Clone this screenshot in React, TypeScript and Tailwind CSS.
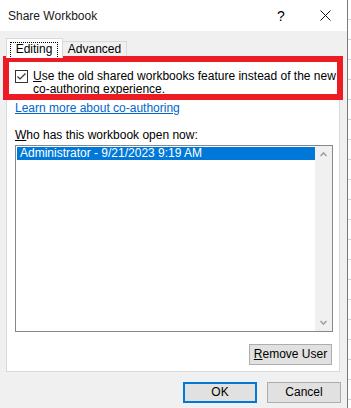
import React from 'react';

const font = { fontFamily: '"Liberation Sans", Arial, sans-serif' };

const Chevron: React.FC<{ up?: boolean }> = ({ up }) => (
  <svg width="17" height="17" viewBox="0 0 17 17">
    <polyline
      points={up ? '5.5,10 8.5,7 11.5,10' : '5.5,7 8.5,10 11.5,7'}
      fill="none"
      stroke="#a3a3a3"
      strokeWidth="1.6"
    />
  </svg>
);

const App: React.FC = () => {
  return (
    <div className="w-[351px] h-[408px] bg-white relative overflow-hidden flex text-[12px] text-black" style={font}>
      {/* dialog window */}
      <div className="w-[348px] h-full flex flex-col border-r border-[#7a7a7a]">
        {/* title bar */}
        <div className="h-[31px] bg-white flex items-center pl-[8px] shrink-0">
          <span className="leading-[14px] text-[12px] text-[#1a1a1a]">Share Workbook</span>
          <span className="ml-auto text-[14px] leading-[14px] w-[8px] text-center mr-[35px]">?</span>
          <svg width="11" height="11" viewBox="0 0 11 11" className="mr-[16px]">
            <path d="M0.5 0.5 L10.5 10.5 M10.5 0.5 L0.5 10.5" stroke="#111" strokeWidth="1" />
          </svg>
        </div>

        {/* body */}
        <div className="flex-1 bg-[#f0f0f0] pl-[6px] pt-[7px] flex flex-col">
          {/* tabs */}
          <div className="flex items-end h-[19px]">
            <div className="relative z-10 w-[57px] h-[20px] -mb-[1px] bg-white border border-b-0 border-[#d9d9d9] pl-[3px] pt-[3px]">
              <span className="block w-[48px] h-[15px] border border-b-0 border-dotted border-black text-center leading-[13px]">
                Editing
              </span>
            </div>
            <div className="w-[64px] h-[16px] border-t border-r border-[#d9d9d9] bg-[#f0f0f0] text-center leading-[13px] pt-[1px]">
              Advanced
            </div>
          </div>

          {/* tab panel */}
          <div className="w-[334px] h-[315px] bg-white border border-[#d9d9d9] pl-[8px] pt-[12px] flex flex-col">
            <div className="flex gap-[5px]">
              <div className="w-[13px] h-[13px] border border-[#333] bg-white shrink-0 flex items-center justify-center">
                <svg width="11" height="11" viewBox="0 0 11 11">
                  <polyline points="1.5,5.5 4,8 9.5,2.5" fill="none" stroke="#333" strokeWidth="1.2" />
                </svg>
              </div>
              <div className="leading-[13px] whitespace-nowrap">
                <span className="underline">U</span>se the old shared workbooks feature instead of the new
                <br />
                co-authoring experience.
              </div>
            </div>

            <a className="mt-[6px] leading-[13px] text-[#0066cc] underline w-fit">Learn more about co-authoring</a>

            <div className="mt-[14px] leading-[13px]">
              <span className="underline">W</span>ho has this workbook open now:
            </div>

            <div className="mt-[3px] w-[318px] h-[187px] border border-[#828790] bg-white flex">
              <div className="flex-1 pt-[1px] pl-[1px]">
                <div className="h-[13px] bg-[#0078d7] text-white leading-[13px] pl-[3px] whitespace-nowrap">
                  Administrator - 9/21/2023 9:19 AM
                </div>
              </div>
              <div className="w-[17px] bg-[#f0f0f0] flex flex-col justify-between">
                <Chevron up />
                <Chevron />
              </div>
            </div>

            <div className="mt-[12px] w-[318px] flex justify-end pr-[1px]">
              <button className="w-[83px] h-[21px] bg-[#e1e1e1] border border-[#adadad] leading-[13px] text-center">
                <span className="underline">R</span>emove User
              </button>
            </div>
          </div>

          {/* dialog buttons */}
          <div className="mt-[10px] w-[335px] flex justify-end gap-[10px]">
            <button className="w-[74px] h-[21px] bg-[#e1e1e1] border-2 border-[#0078d7] leading-[13px]">OK</button>
            <button className="w-[74px] h-[21px] bg-[#e1e1e1] border border-[#adadad] leading-[13px]">Cancel</button>
          </div>
        </div>
      </div>

      {/* sheet grid peeking behind the dialog */}
      <div className="w-[3px] h-full bg-white bg-[repeating-linear-gradient(to_bottom,transparent_0,transparent_19px,#d4d4d4_19px,#d4d4d4_20px)]" />

      {/* red highlight annotation */}
      <div className="absolute left-[3px] top-[56px] w-[340px] h-[44px] border-[6px] border-[#ed1c24] pointer-events-none" />
    </div>
  );
};

export default App;
